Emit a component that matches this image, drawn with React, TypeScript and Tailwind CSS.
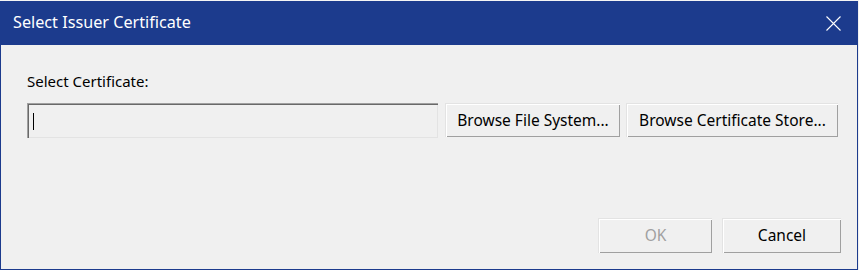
import React from 'react'

const font = { fontFamily: '"Noto Sans", "Open Sans", Arial, sans-serif' }

function Button({ label, width, height, disabled }: { label: string; width: string; height: string; disabled?: boolean }) {
  return (
    <button
      type="button"
      disabled={disabled}
      className={`${width} ${height} shrink-0 bg-[#f0f0f0] border-t border-l border-[#e3e3e3] border-r-[#696969] border-b-[#696969] shadow-[inset_1px_1px_0_#ffffff,inset_-1px_-1px_0_#a0a0a0] text-[15.5px] leading-none flex items-center justify-center ${disabled ? 'text-[#a0a0a0]' : 'text-black'}`}
    >
      {label}
    </button>
  )
}

export default function App() {
  return (
    <div className="w-[859px] h-[270px] bg-[#f0f0f0] flex flex-col overflow-hidden" style={font}>
      {/* sliver of whatever is behind the dialog */}
      <div className="h-px bg-[#f4f4f4] shrink-0" />

      <div className="w-[858px] flex-1 flex flex-col border-x border-b border-[#1c3b8d]">
        <div className="h-[44px] shrink-0 bg-[#1c3b8d] flex items-center justify-between pl-[12px] pr-[16px]">
          <span className="text-white text-[16.2px] leading-none -mt-px">Select Issuer Certificate</span>
          <svg width="15" height="15" viewBox="0 0 15 15" className="mt-px">
            <path d="M0.5 0.5 L14.5 14.5 M14.5 0.5 L0.5 14.5" stroke="#ffffff" strokeWidth="1.1" />
          </svg>
        </div>

        <div className="flex-1 flex flex-col bg-[#f0f0f0] pl-[26px] pr-[16px]">
          <div className="mt-[26px] h-[20px] text-[15px] leading-[20px] text-black">Select Certificate:</div>

          <div className="mt-[12px] flex items-start">
            <div className="w-[411px] h-[35px] shrink-0 bg-[#f0f0f0] border-t border-l border-[#a0a0a0] border-r-white border-b-white shadow-[inset_1px_1px_0_#696969,inset_-1px_-1px_0_#e3e3e3] flex items-center pl-[5px]">
              <div className="w-px h-[17px] bg-black" />
            </div>
            <div className="ml-[7px] flex gap-[6px]">
              <Button label="Browse File System..." width="w-[175px]" height="h-[34px]" />
              <Button label="Browse Certificate Store..." width="w-[212px]" height="h-[34px]" />
            </div>
          </div>

          <div className="flex-1" />

          <div className="flex justify-end gap-[10px] mb-[16px]">
            <Button label="OK" width="w-[114px]" height="h-[35px]" disabled />
            <Button label="Cancel" width="w-[119px]" height="h-[35px]" />
          </div>
        </div>
      </div>
    </div>
  )
}
